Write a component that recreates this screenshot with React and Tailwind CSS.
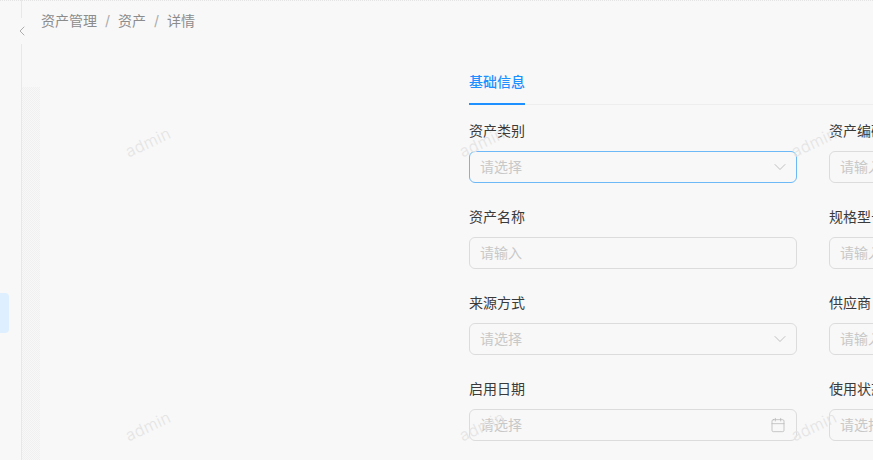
import { ChevronDown, ChevronLeft, Calendar } from "lucide-react";

const font = "font-['Inter','Noto_Sans_CJK_SC',sans-serif]";

const rows = [
  [
    { label: "资产类别", hint: "请选择", icon: "down", active: true },
    { label: "资产编码", hint: "请输入" },
  ],
  [
    { label: "资产名称", hint: "请输入" },
    { label: "规格型号", hint: "请输入" },
  ],
  [
    { label: "来源方式", hint: "请选择", icon: "down" },
    { label: "供应商", hint: "请输入" },
  ],
  [
    { label: "启用日期", hint: "请选择", icon: "date" },
    { label: "使用状态", hint: "请选择" },
  ],
];

const marks = [
  ["left-[124px]", "top-[132px]"],
  ["left-[458px]", "top-[132px]"],
  ["left-[790px]", "top-[132px]"],
  ["left-[124px]", "top-[416px]"],
  ["left-[458px]", "top-[416px]"],
  ["left-[790px]", "top-[416px]"],
];

function Field({ label, hint, icon, active }) {
  return (
    <div className="w-[328px] shrink-0">
      <div className="h-[22px] text-[14px] leading-[22px] text-[#3a3a3a]">{label}</div>
      <div
        className={`mt-[9px] flex h-[32px] items-center justify-between rounded-[6px] border bg-transparent pl-[10px] text-[14px] text-[#c8c8c8] ${
          active ? "border-[#6db8f7]" : "border-[#dcdcdc]"
        } ${icon === "date" ? "pr-[10px]" : "pr-[6px]"}`}
      >
        <span className="-mt-[2px]">{hint}</span>
        {icon === "down" && <ChevronDown size={20} strokeWidth={1} className="text-[#b5b5b5]" />}
        {icon === "date" && <Calendar size={16} strokeWidth={1.1} className="text-[#b5b5b5]" />}
      </div>
    </div>
  );
}

export default function App() {
  return (
    <div className={`${font} relative flex h-[460px] w-[873px] overflow-hidden bg-[#f8f8f8]`}>
      <div className="absolute inset-x-0 top-0 border-t border-dotted border-[#e4e4e4]" />

      {/* sidebar */}
      <aside className="relative w-[22px] shrink-0 border-r border-[#e8e8e8]">
        <div className="absolute left-0 top-[293px] h-[40px] w-[9px] rounded-r-[4px] bg-[#deefff]" />
        <div className="absolute left-[14px] top-[18px] flex h-[26px] w-[16px] items-center justify-center bg-[#f8f8f8]">
          <ChevronLeft size={16} strokeWidth={1.2} className="text-[#999]" />
        </div>
      </aside>

      {/* dithered edge */}
      <div className="mt-[87px] w-[18px] shrink-0 bg-[conic-gradient(#f0f0f0_25%,#f8f8f8_0_50%,#f0f0f0_0_75%,#f8f8f8_0)] bg-[length:2px_2px]" />

      <main className="min-w-0 flex-1">
        <div className="flex h-[40px] items-center gap-[8px] pl-[1px] text-[14px] text-[#8c8c8c]">
          <span>资产管理</span>
          <span className="text-[#aaa]">/</span>
          <span>资产</span>
          <span className="text-[#aaa]">/</span>
          <span>详情</span>
        </div>

        <div className="ml-[429px] mt-[24px]">
          <div className="flex h-[41px] border-b border-[#eeeeee]">
            <div className="h-[41px] w-[56px] border-b-2 border-[#1e90ff] pt-[7px] text-[14px] font-medium leading-[22px] text-[#1e90ff]">
              基础信息
            </div>
          </div>
          <div className="mt-[15px] flex flex-col gap-[23px]">
            {rows.map((row, i) => (
              <div key={i} className="flex gap-[32px]">
                {row.map((f) => (
                  <Field key={f.label} {...f} />
                ))}
              </div>
            ))}
          </div>
        </div>
      </main>

      {/* watermark */}
      {marks.map(([x, y], i) => (
        <span
          key={i}
          className={`pointer-events-none absolute ${x} ${y} -rotate-[25deg] text-[16px] font-light leading-[20px] tracking-[0.5px] text-[#e4e4e4]`}
        >
          admin
        </span>
      ))}
    </div>
  );
}
